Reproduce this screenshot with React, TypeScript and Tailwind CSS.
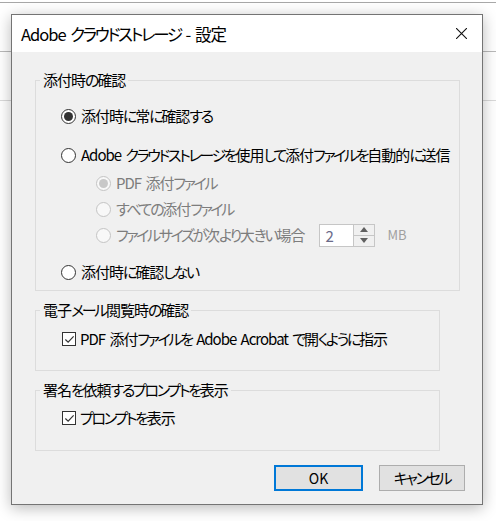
import clsx from "clsx";

// Kana and Latin runs get their own spacing so lines keep the narrow UI-font width.
const Jp = ({ text }: { text: string }) => (
  <>
    {text.split(/([\u3041-\u30ff]+|[\x20-\x7e]+)/).map((part, i) => {
      if (!part) return null;
      if (/[\u3041-\u30ff]/.test(part))
        return (
          <span key={i} className="tracking-[-2.3px]">
            {part}
          </span>
        );
      if (/[\x20-\x7e]/.test(part))
        return (
          <span key={i} className="tracking-[-1px] [word-spacing:2px]">
            {part}
          </span>
        );
      return <span key={i}>{part}</span>;
    })}
  </>
);

type RadioProps = {
  label: string;
  checked?: boolean;
  disabled?: boolean;
  className?: string;
  children?: React.ReactNode;
};

const Radio = ({ label, checked, disabled, className, children }: RadioProps) => (
  <label className={clsx("flex items-center h-5 gap-[5px] whitespace-nowrap", className)}>
    <span
      className={clsx(
        "w-[15px] h-[15px] shrink-0 rounded-full border flex items-center justify-center",
        disabled ? "border-[#c4c4c4] bg-[#f8f8f8]" : "border-[#333333] bg-white"
      )}
    >
      {checked && (
        <span
          className={clsx(
            "w-[9px] h-[9px] rounded-full",
            disabled ? "bg-[#c8c8c8]" : "bg-[#333333]"
          )}
        />
      )}
    </span>
    <span className={disabled ? "text-[#7d7d7d]" : "text-black"}>
      <Jp text={label} />
    </span>
    {children}
  </label>
);

const Checkbox = ({ label }: { label: string }) => (
  <label className="flex items-center h-5 gap-[4px] pl-[26px] whitespace-nowrap">
    <span className="w-[14px] h-[14px] shrink-0 border border-[#333333] bg-white flex items-center justify-center">
      <svg viewBox="0 0 12 12" className="w-[11px] h-[11px]">
        <path d="M1.5 6 L4.5 9 L10.5 2.5" stroke="#333333" strokeWidth="1.3" fill="none" />
      </svg>
    </span>
    <span>
      <Jp text={label} />
    </span>
  </label>
);

const Spinner = () => (
  <div className="flex h-[23px] w-[56px] ml-[10px] border border-[#c6c6c6] bg-white">
    <span className="flex-1 pl-[5px] leading-[21px] text-[#6b6b8a]">2</span>
    <div className="w-[21px] flex flex-col border-l border-[#c6c6c6] bg-[#f0f0f0]">
      <span className="flex-1 flex items-center justify-center border-b border-[#c6c6c6]">
        <svg viewBox="0 0 8 5" className="w-[8px] h-[5px]">
          <path d="M0 5 L4 0 L8 5 Z" fill="#606060" />
        </svg>
      </span>
      <span className="flex-1 flex items-center justify-center">
        <svg viewBox="0 0 8 5" className="w-[8px] h-[5px]">
          <path d="M0 0 L4 5 L8 0 Z" fill="#606060" />
        </svg>
      </span>
    </div>
  </div>
);

const App = () => {
  return (
    <div className="relative w-[496px] h-[521px] bg-white overflow-hidden pl-[11px] pt-[14px] font-['Noto_Sans_CJK_JP',sans-serif] text-[15px] leading-[20px] tracking-[-1px] text-black [font-feature-settings:'palt']">
      {/* window lying behind the dialog */}
      <div className="absolute left-0 right-0 top-[2px] h-px bg-[#a8a8a8]" />
      <div className="absolute left-0 right-0 top-[51px] h-px bg-[#b9b9b9]" />
      <div className="absolute left-0 right-0 top-[100px] h-px bg-[#dadada]" />

      <div className="relative w-[472px] border border-[#747474] bg-[#f0f0f0] shadow-[0_3px_14px_rgba(0,0,0,0.28)]">
        <div className="h-[37px] bg-white flex items-center justify-between pl-[9px] pr-[15px]">
          <span className="text-[16.5px]">
            <Jp text="Adobe クラウドストレージ - 設定" />
          </span>
          <svg viewBox="0 0 10 10" className="w-[11px] h-[11px]">
            <path d="M0 0 L10 10 M10 0 L0 10" stroke="#111111" strokeWidth="1" />
          </svg>
        </div>

        <div className="pl-[23px] pr-[22px] pt-[18px] pb-[13px]">
          <fieldset className="border border-[#dcdcdc]">
            <legend className="ml-[4px] px-[3px]">
              <Jp text="添付時の確認" />
            </legend>
            <div className="pl-[25px] pt-[16px] pb-[8px]">
              <Radio label="添付時に常に確認する" checked />
              <Radio
                className="mt-[19px]"
                label="Adobe クラウドストレージを使用して添付ファイルを自動的に送信"
              />
              <div className="pl-[35px]">
                <Radio className="mt-[8px]" label="PDF 添付ファイル" checked disabled />
                <Radio className="mt-[6px]" label="すべての添付ファイル" disabled />
                <Radio className="mt-[6px]" label="ファイルサイズが次より大きい場合" disabled>
                  <Spinner />
                  <span className="ml-[7px] text-[13px] tracking-normal text-[#a0a0a0]">MB</span>
                </Radio>
              </div>
              <Radio className="mt-[17px]" label="添付時に確認しない" />
            </div>
          </fieldset>

          <fieldset className="w-[405px] mt-[9px] border border-[#dcdcdc] pt-[9px] pb-[21px]">
            <legend className="ml-[4px] px-[3px]">
              <Jp text="電子メール閲覧時の確認" />
            </legend>
            <Checkbox label="PDF 添付ファイルを Adobe Acrobat で開くように指示" />
          </fieldset>

          <fieldset className="w-[405px] mt-[9px] border border-[#dcdcdc] pt-[8px] pb-[22px]">
            <legend className="ml-[4px] px-[3px]">
              <Jp text="署名を依頼するプロンプトを表示" />
            </legend>
            <Checkbox label="プロンプトを表示" />
          </fieldset>

          <div className="mt-[14px] flex justify-end gap-[16px]">
            <button
              type="button"
              className="w-[89px] h-[26px] border-2 border-[#0078d7] bg-[#e1e1e1] text-[14px] tracking-normal"
            >
              OK
            </button>
            <button
              type="button"
              className="w-[86px] h-[26px] border border-[#adadad] bg-[#e1e1e1] mr-[-5px]"
            >
              <Jp text="キャンセル" />
            </button>
          </div>
        </div>
      </div>
    </div>
  );
};

export default App;
